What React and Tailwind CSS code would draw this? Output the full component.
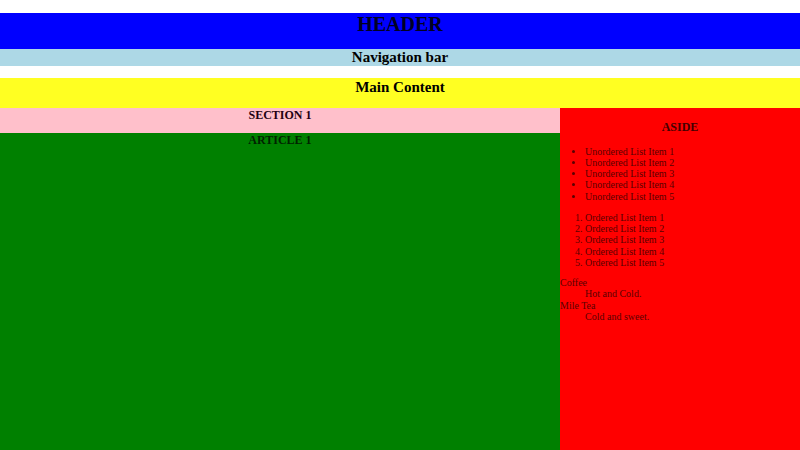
export default function App() {
  return (
    <div className="w-[800px] h-[450px] overflow-hidden bg-white text-black font-['Liberation_Serif',serif]">
      <div className="h-[13px]" />
      <header className="h-[36px] bg-[#0000ff] pt-[1px] text-center">
        <h1 className="text-[20px] leading-[20px] font-bold text-[#000022]">HEADER</h1>
      </header>
      <nav className="h-[17px] bg-[#add8e6] text-center">
        <h3 className="text-[15px] leading-[17px] font-bold">Navigation bar</h3>
      </nav>
      <div className="h-[12px]" />
      <div className="h-[30px] bg-[#ffff22] pt-[1px] text-center">
        <h3 className="text-[15px] leading-[17px] font-bold">Main Content</h3>
      </div>
      <div className="flex h-[342px]">
        <main className="w-[560px] flex flex-col">
          <section className="h-[25px] bg-[#ffc0cb] text-center">
            <h4 className="text-[12px] leading-[14px] font-bold text-[#220011]">SECTION 1</h4>
          </section>
          <article className="flex-1 bg-[#008000] text-center">
            <h4 className="text-[12px] leading-[14px] font-bold text-[#002200]">ARTICLE 1</h4>
          </article>
        </main>
        <aside className="w-[240px] bg-[#ff0000] pt-[12px] text-[10px] leading-[11.25px] text-[#5a0000]">
          <h4 className="text-center text-[12px] leading-[14px] font-bold text-[#440000]">ASIDE</h4>
          <ul className="mt-[11.5px] list-disc pl-[25px]">
            <li>Unordered List Item 1</li>
            <li>Unordered List Item 2</li>
            <li>Unordered List Item 3</li>
            <li>Unordered List Item 4</li>
            <li>Unordered List Item 5</li>
          </ul>
          <ol className="mt-[10px] list-decimal pl-[25px]">
            <li>Ordered List Item 1</li>
            <li>Ordered List Item 2</li>
            <li>Ordered List Item 3</li>
            <li>Ordered List Item 4</li>
            <li>Ordered List Item 5</li>
          </ol>
          <dl className="mt-[9px]">
            <dt>Coffee</dt>
            <dd className="pl-[25px]">Hot and Cold.</dd>
            <dt>Mile Tea</dt>
            <dd className="pl-[25px]">Cold and sweet.</dd>
          </dl>
        </aside>
      </div>
    </div>
  );
}
